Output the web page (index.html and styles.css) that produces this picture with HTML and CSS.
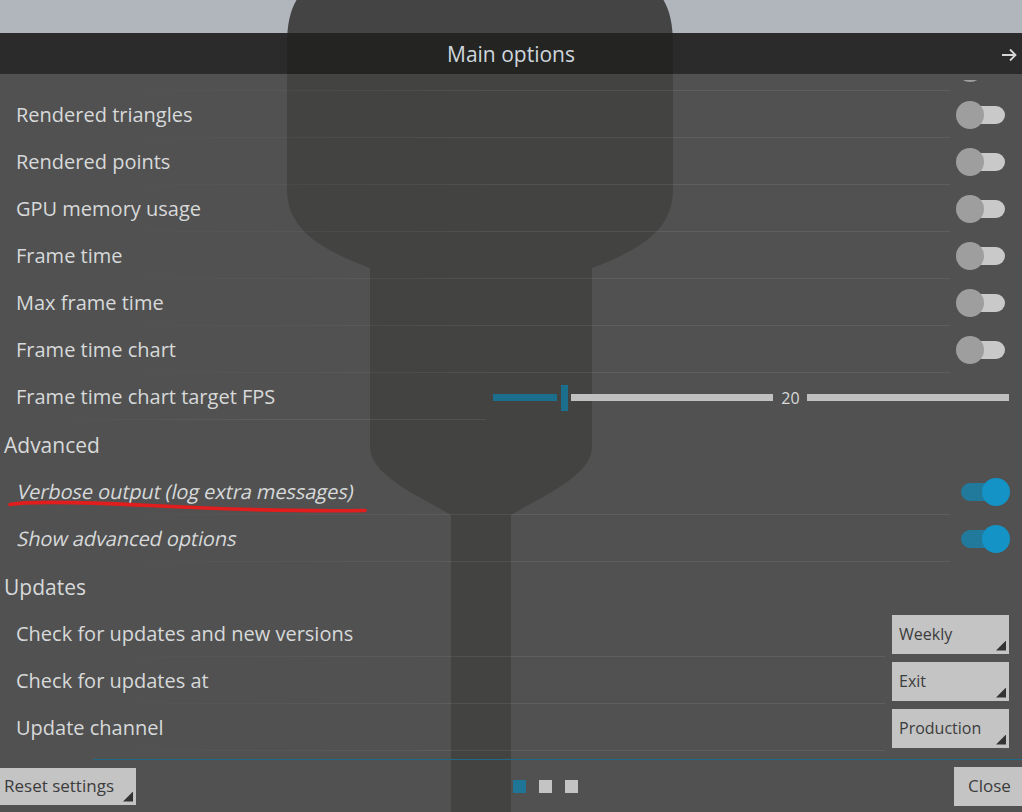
FILE: index.html
```html
<!DOCTYPE html>
<html>
<head>
<meta charset="utf-8">
<title>Main options</title>
<link rel="stylesheet" href="styles.css">
</head>
<body>
<svg class="scene" width="1022" height="812" viewBox="0 0 1022 812" aria-hidden="true">
  <path d="M287 190 L287 45 C287 20 292 5 300 -5 L660 -5 C668 5 673 20 673 45 L673 190 C673 230 640 250 592 268 L592 447 C592 475 545 495 511 515 L511 812 L451 812 L451 515 C417 495 370 475 370 447 L370 268 C322 250 287 230 287 190 Z" fill="#444444"/>
</svg>

<div class="dialog">
  <div class="header">
    <span></span>
    <span class="title">Main options</span>
    <span class="next">
      <svg width="16" height="16" viewBox="0 0 16 16"><path d="M1 8 H14.5 M9 2.5 L14.5 8 L9 13.5" fill="none" stroke="#d6d6d6" stroke-width="1.8"/></svg>
    </span>
  </div>

  <div class="content">
    <div class="list">
      <div class="row"><div class="label"></div><div class="toggle"><span class="track"></span><span class="knob"></span></div></div>
      <div class="row"><div class="label">Rendered triangles</div><div class="toggle"><span class="track"></span><span class="knob"></span></div></div>
      <div class="row"><div class="label">Rendered points</div><div class="toggle"><span class="track"></span><span class="knob"></span></div></div>
      <div class="row"><div class="label">GPU memory usage</div><div class="toggle"><span class="track"></span><span class="knob"></span></div></div>
      <div class="row"><div class="label">Frame time</div><div class="toggle"><span class="track"></span><span class="knob"></span></div></div>
      <div class="row"><div class="label">Max frame time</div><div class="toggle"><span class="track"></span><span class="knob"></span></div></div>
      <div class="row"><div class="label">Frame time chart</div><div class="toggle"><span class="track"></span><span class="knob"></span></div></div>
      <div class="row"><div class="label">Frame time chart target FPS</div>
        <div class="slider">
          <span class="fill"></span>
          <span class="handle"></span>
          <span class="rest"><span class="bar"></span><span class="value">20</span><span class="bar"></span></span>
        </div>
      </div>

      <div class="section">Advanced</div>
      <div class="row"><div class="label"><span class="slant">Verbose output (log extra messages)</span></div><div class="toggle on"><span class="track"></span><span class="knob"></span></div></div>
      <div class="row"><div class="label"><span class="slant">Show advanced options</span></div><div class="toggle on"><span class="track"></span><span class="knob"></span></div></div>

      <div class="section">Updates</div>
      <div class="row"><div class="label">Check for updates and new versions</div><div class="select">Weekly</div></div>
      <div class="row"><div class="label">Check for updates at</div><div class="select">Exit</div></div>
      <div class="row"><div class="label">Update channel</div><div class="select">Production</div></div>
    </div>
  </div>

  <div class="footer">
    <div class="btn reset">Reset settings</div>
    <div class="pages"><span class="dot active"></span><span class="dot"></span><span class="dot"></span></div>
    <div class="btn close">Close</div>
  </div>
</div>

<svg class="annotation" width="1022" height="812" viewBox="0 0 1022 812" aria-hidden="true">
  <path d="M10 504.5 C30 501 80 502 150 505.5 C220 509 300 511.5 365 510.5" fill="none" stroke="#e11d1d" stroke-width="3.6" stroke-linecap="round"/>
</svg>
</body>
</html>
```

FILE: styles.css
```css
html, body {
  margin: 0;
  padding: 0;
}

body {
  width: 1022px;
  height: 812px;
  overflow: hidden;
  position: relative;
  background: #b1b5bc;
  font-family: "Open Sans", "Noto Sans", sans-serif;
  color: #d7d9da;
  padding-top: 33px;
  box-sizing: border-box;
}

.scene {
  position: absolute;
  left: 0;
  top: 0;
  z-index: 0;
}

.annotation {
  position: absolute;
  left: 0;
  top: 0;
  z-index: 5;
  pointer-events: none;
}

.dialog {
  position: relative;
  z-index: 1;
  height: 779px;
  display: flex;
  flex-direction: column;
  background: rgba(67, 67, 66, 0.88);
}

.header {
  height: 41px;
  flex: none;
  display: grid;
  grid-template-columns: 1fr auto 1fr;
  align-items: center;
  background: rgba(0, 0, 0, 0.46);
}

.title {
  font-size: 21px;
  color: #cfd6dc;
  line-height: 41px;
  padding-top: 1px;
}

.next {
  justify-self: end;
  display: flex;
  margin-right: 5px;
  margin-top: 1px;
}

.content {
  flex: 1;
  overflow: hidden;
  margin-top: 6px;
}

.list {
  margin-top: -36px;
}

.row {
  height: 47px;
  display: flex;
  align-items: center;
  padding-right: 12px;
}

.label {
  flex: 1;
  align-self: stretch;
  display: flex;
  align-items: center;
  padding-left: 16px;
  padding-top: 1px;
  font-size: 20px;
  white-space: nowrap;
  border-bottom: 1px solid transparent;
  background-image: linear-gradient(to right, rgba(255, 255, 255, 0) 10%, rgba(255, 255, 255, 0.075) 55%);
  background-size: 100% 1px;
  background-repeat: no-repeat;
  background-position: bottom left;
  background-origin: border-box;
  margin-right: 6px;
}

.slant {
  display: inline-block;
  transform: skewX(-12deg);
  transform-origin: 0 100%;
  margin-left: -1px;
  letter-spacing: -0.1px;
}

.section {
  height: 48px;
  display: flex;
  align-items: center;
  padding-left: 4px;
  padding-top: 2px;
  box-sizing: border-box;
  font-size: 21px;
}

/* toggle */
.toggle {
  position: relative;
  width: 54px;
  height: 28px;
  margin-top: 1px;
}

.toggle .track {
  position: absolute;
  left: 3px;
  right: 5px;
  top: 5px;
  height: 18px;
  border-radius: 9px;
  background: #c9c9c9;
}

.toggle .knob {
  position: absolute;
  left: 0;
  top: 0;
  width: 28px;
  height: 28px;
  border-radius: 50%;
  background: #9e9e9e;
}

.toggle.on .track {
  left: 5px;
  background: #217a9b;
}

.toggle.on .knob {
  left: auto;
  right: 0;
  background: #1393c6;
}

/* slider */
.slider {
  width: 516px;
  height: 26px;
  display: flex;
  align-items: center;
  margin-left: 1px;
  margin-right: 1px;
  margin-top: 2px;
}

.slider .fill {
  width: 64px;
  height: 7px;
  background: #1b6f8d;
}

.slider .handle {
  width: 7px;
  height: 26px;
  margin: 0 3px 0 4px;
  background: #1b6f8d;
}

.slider .rest {
  flex: 1;
  display: flex;
  align-items: center;
}

.slider .bar {
  flex: 1;
  height: 7px;
  background: #c0c0c0;
}

.slider .value {
  padding: 0 7px 0 8px;
  font-size: 16px;
  line-height: 20px;
  color: #d7d9da;
}

/* select */
.select {
  position: relative;
  width: 117px;
  height: 39px;
  box-sizing: border-box;
  margin-left: 1px;
  margin-right: 1px;
  margin-top: 1px;
  padding-left: 7px;
  padding-bottom: 1px;
  display: flex;
  align-items: center;
  background: #c4c4c4;
  color: #3c3c3c;
  font-size: 16px;
}

.select::after,
.btn.reset::after {
  content: "";
  position: absolute;
  right: 3px;
  bottom: 3px;
  width: 10px;
  height: 10px;
  background: #333333;
  clip-path: polygon(100% 0, 100% 100%, 0 100%);
}

/* footer */
.footer {
  flex: none;
  height: 52px;
  display: flex;
  align-items: center;
  border-top: 1px solid transparent;
  background-image: linear-gradient(to right, rgba(30, 106, 134, 0) 92px, #1e6a86 94px);
  background-size: 100% 1px;
  background-repeat: no-repeat;
  background-position: top left;
  background-origin: border-box;
}

.btn {
  position: relative;
  background: #c4c4c4;
  color: #3c3c3c;
  font-size: 17px;
  display: flex;
  align-items: center;
  box-sizing: border-box;
  padding-bottom: 1px;
}

.btn.reset {
  width: 136px;
  height: 37px;
  padding-left: 4px;
}

.btn.close {
  width: 68px;
  height: 39px;
  padding-left: 14px;
}

.pages {
  flex: 1;
  display: flex;
  justify-content: center;
  gap: 13px;
}

.dot {
  width: 13px;
  height: 13px;
  background: #c4c4c4;
}

.dot.active {
  background: #1e7596;
}
```
